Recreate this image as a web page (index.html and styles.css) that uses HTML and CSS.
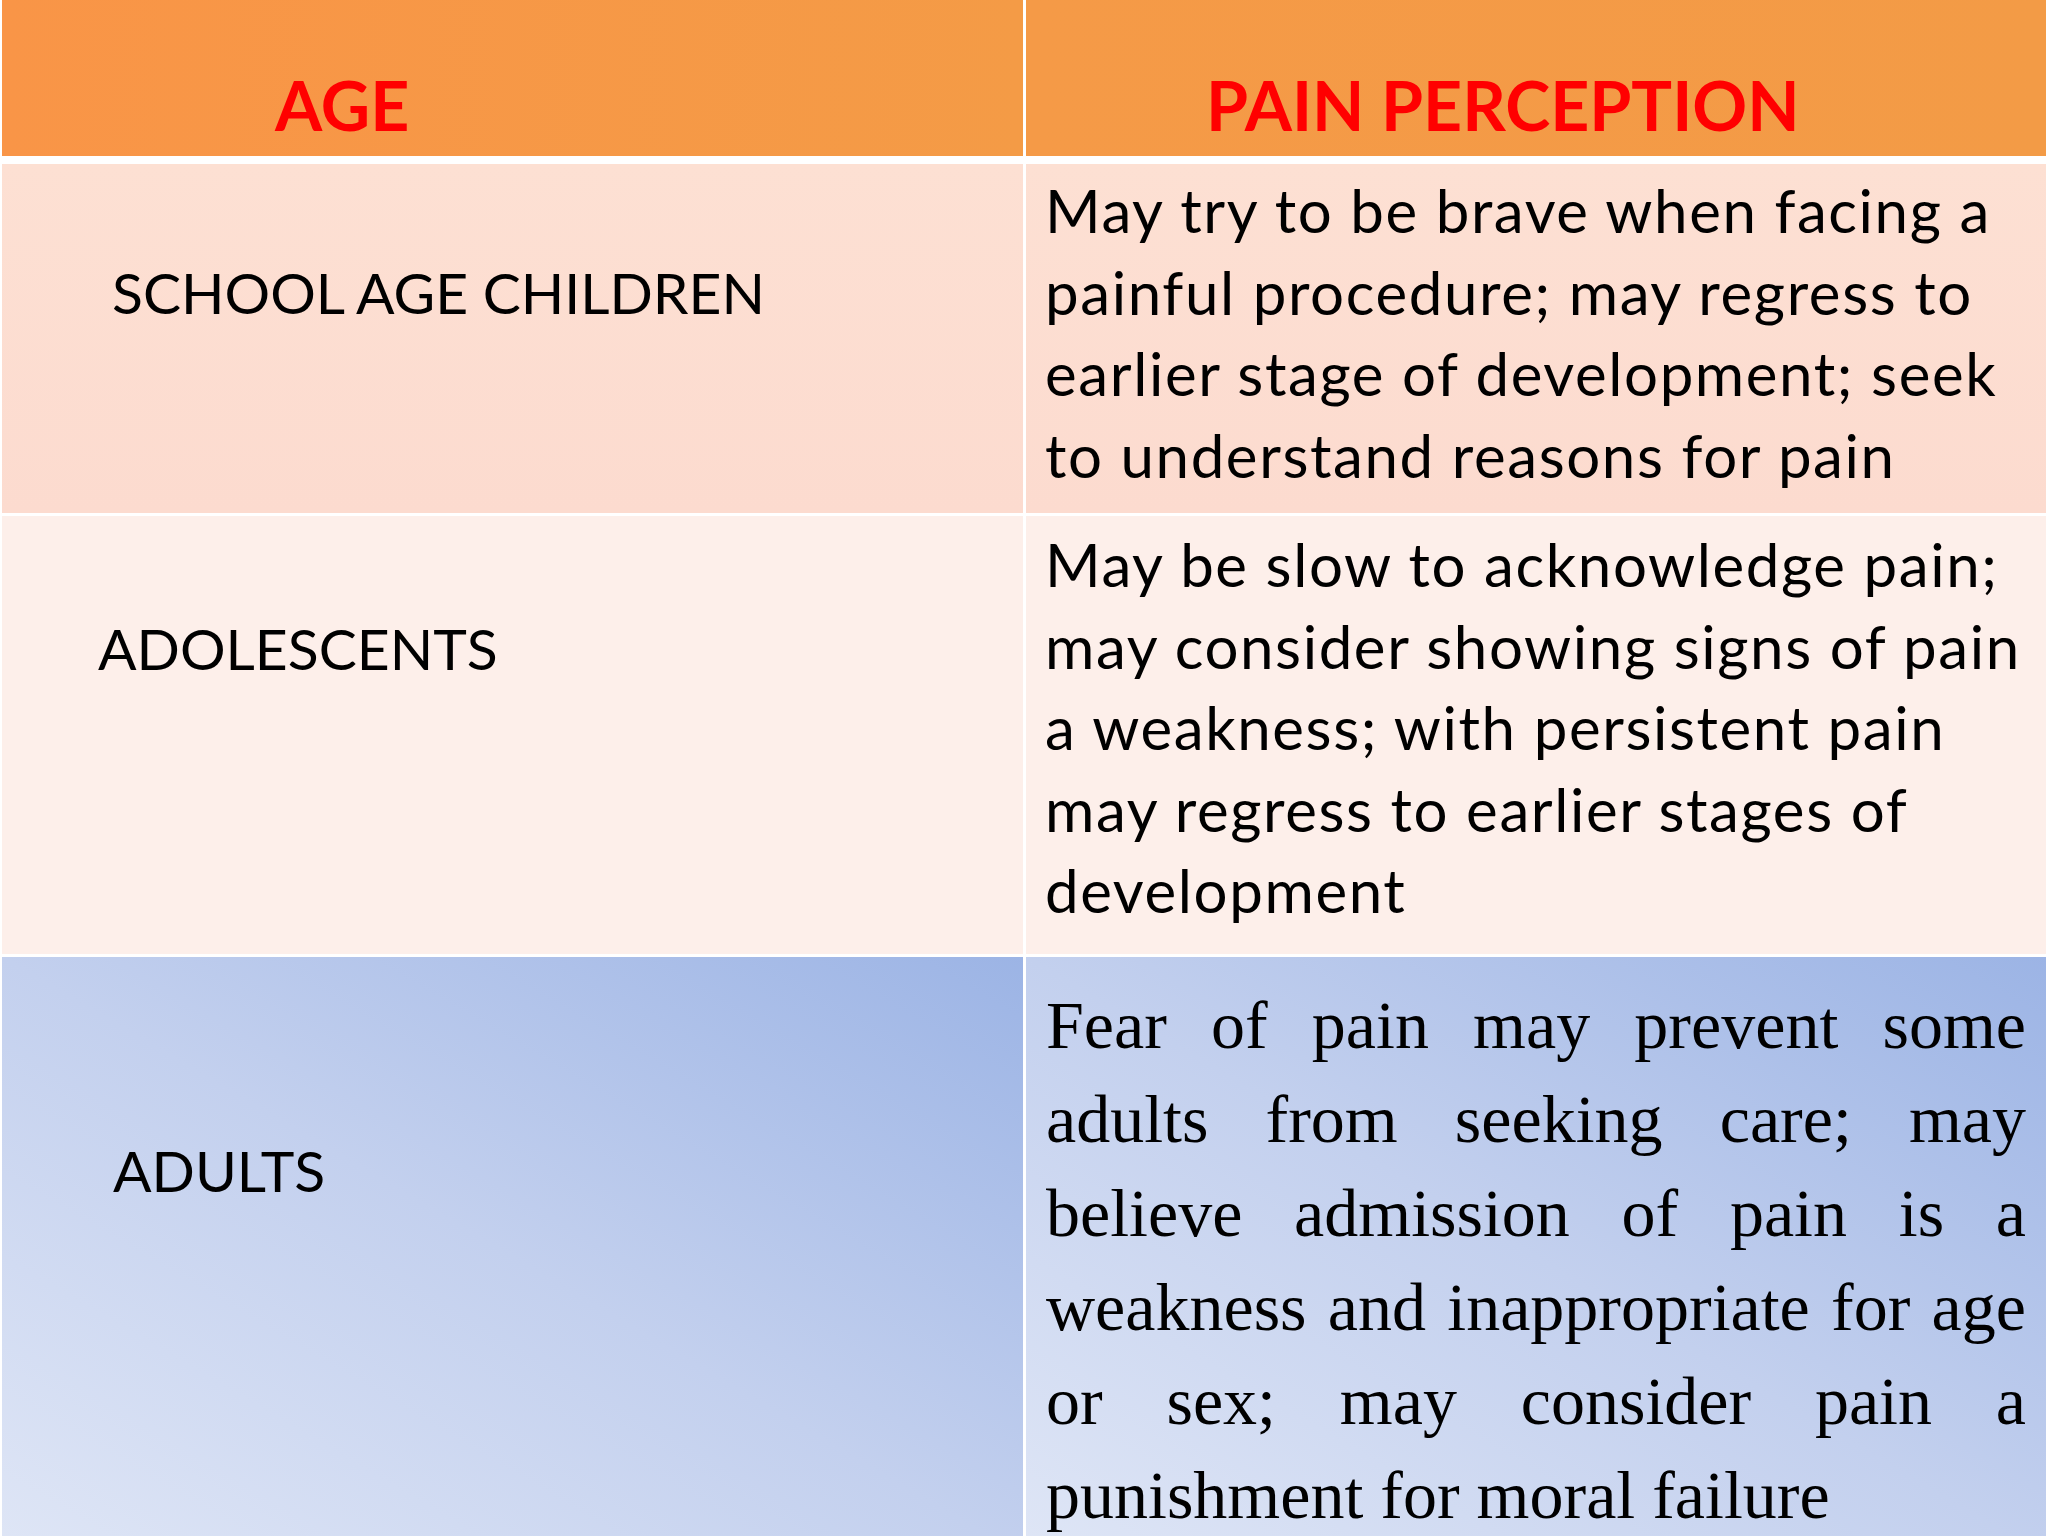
FILE: index.html
```
<!DOCTYPE html>
<html lang="en">
<head>
<meta charset="utf-8">
<title>Age and Pain Perception</title>
<link rel="stylesheet" href="styles.css">
</head>
<body>
<div class="table">
  <div class="row head">
    <div class="cell h-age"><span>AGE</span></div>
    <div class="cell h-pain"><span>PAIN PERCEPTION</span></div>
  </div>
  <div class="row r1">
    <div class="cell age age1">SCHOOL AGE CHILDREN</div>
    <div class="cell desc desc1">May try to be brave when facing a<br>painful procedure; may regress to<br>earlier stage of development; seek<br>to understand reasons for pain</div>
  </div>
  <div class="row r2">
    <div class="cell age age2">ADOLESCENTS</div>
    <div class="cell desc desc2">May be slow to acknowledge pain;<br>may consider showing signs of pain<br>a weakness; with persistent pain<br>may regress to earlier stages of<br>development</div>
  </div>
  <div class="row r3">
    <div class="cell age age3">ADULTS</div>
    <div class="cell serif">
      <span class="jl">Fear of pain may prevent some</span>
      <span class="jl">adults from seeking care; may</span>
      <span class="jl">believe admission of pain is a</span>
      <span class="jl">weakness and inappropriate for age</span>
      <span class="jl">or sex; may consider pain a</span>
      <span class="last">punishment for moral failure</span>
    </div>
  </div>
</div>
</body>
</html>
```
FILE: styles.css
```
html, body {
  margin: 0;
  padding: 0;
  background: #ffffff;
}
body {
  width: 2048px;
  height: 1536px;
  overflow: hidden;
}
.table {
  display: flex;
  flex-direction: column;
  gap: 3px;
  padding-left: 2px;
}
.row {
  display: grid;
  grid-template-columns: 1021px 1020px;
  column-gap: 3px;
}
.cell {
  box-sizing: border-box;
  color: #000;
  font-family: Lato, "Open Sans", sans-serif;
}
.head {
  height: 156px;
  margin-bottom: 5px;
}
.head .cell {
  background: linear-gradient(to right, #f99547, #f49b46);
  color: #ff0000;
  font-weight: 700;
  font-size: 68px;
  line-height: 84px;
  padding-top: 63px;
  white-space: nowrap;
}
.head .h-pain {
  background: linear-gradient(to right, #f59a47, #f39b46);
}
.h-age { padding-left: 273px; }
.h-pain { padding-left: 180px; }

.r1 { height: 349px; }
.r2 { height: 438px; }
.r3 { height: 600px; }

.r1 .cell { background: linear-gradient(to bottom, #fde0d3, #fcdbcf); }
.r2 .cell { background: #fdefea; }
.r3 .cell { background: linear-gradient(to top right, #dfe6f6 0%, #c3d0ee 50%, #9cb4e5 100%); }

.age, .desc {
  font-size: 57px;
  line-height: 81.5px;
  white-space: nowrap;
}
.desc {
  font-size: 60px;
  letter-spacing: 1.6px;
  padding-left: 19px;
}
.age1 { padding: 88px 0 0 110px; }
.age2 { padding: 92px 0 0 96px; }
.age3 { padding: 173px 0 0 111px; }

.desc1 { padding-top: 6px; }
.desc2 { padding-top: 8px; }

.serif {
  font-family: "Liberation Serif", "Times New Roman", serif;
  font-size: 68px;
  line-height: 94px;
  padding: 21px 20px 0 20px;
}
.jl {
  display: block;
  text-align: justify;
  text-align-last: justify;
}
.last {
  display: block;
  text-align: left;
}
```
